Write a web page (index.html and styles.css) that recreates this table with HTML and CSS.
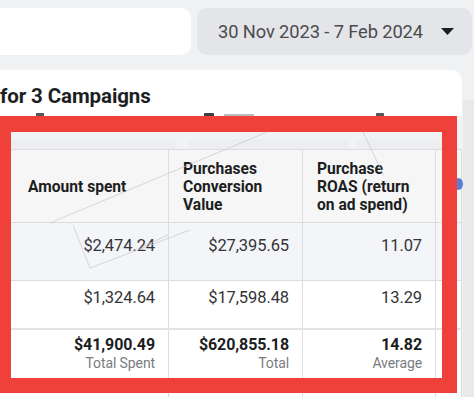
FILE: index.html
```html
<!DOCTYPE html>
<html>
<head>
<meta charset="utf-8">
<link rel="stylesheet" href="styles.css">
</head>
<body>
<div class="page">
  <div class="topbar">
    <div class="search"></div>
    <div class="date">
      <span>30 Nov 2023 - 7 Feb 2024</span>
      <svg class="caret" width="13" height="8" viewBox="0 0 13 8"><path d="M0 0 L13 0 L6.5 7 Z" fill="#1c1e21"/></svg>
    </div>
  </div>
  <div class="card">
    <div class="title">for 3 Campaigns</div>
    <div class="tools">
      <span class="tool t1"></span>
      <span class="tool t2"></span>
      <span class="tool t3"></span>
      <span class="tool t4"></span>
    </div>
    <div class="table">
      <div class="band"><span class="seg s1"></span><span class="seg s2"></span><span class="seg s3"></span></div>
      <div class="row head">
        <div class="cell c1">Amount spent</div>
        <div class="cell c2">Purchases Conversion Value</div>
        <div class="cell c3">Purchase ROAS (return on ad spend)</div>
        <div class="cell c4"><span class="dot"></span></div>
      </div>
      <div class="row r1">
        <div class="cell c1 num">$2,474.24</div>
        <div class="cell c2 num">$27,395.65</div>
        <div class="cell c3 num">11.07</div>
        <div class="cell c4"></div>
      </div>
      <div class="row r2">
        <div class="cell c1 num">$1,324.64</div>
        <div class="cell c2 num">$17,598.48</div>
        <div class="cell c3 num">13.29</div>
        <div class="cell c4"></div>
      </div>
      <div class="row total">
        <div class="cell c1 num"><b>$41,900.49</b><small>Total Spent</small></div>
        <div class="cell c2 num"><b>$620,855.18</b><small>Total</small></div>
        <div class="cell c3 num"><b>14.82</b><small>Average</small></div>
        <div class="cell c4"></div>
      </div>
    </div>
  </div>
  <div class="scroll"></div>
  <svg class="marks" width="474" height="397" viewBox="0 0 474 397">
    <g stroke="#c8c9cc" stroke-width="1" fill="none" opacity="0.7">
      <path d="M50 223 L267 132"/>
      <path d="M362 130 L384 176"/>
      <path d="M73 225 L90 268 L190 230"/>
      <path d="M168 235 L142 247"/>
    </g>
  </svg>
  <div class="redframe"></div>
</div>
</body>
</html>
```
FILE: styles.css
```css
html, body {
  margin: 0;
  padding: 0;
}
body {
  background: #f0f1f3;
  font-family: Roboto, "Noto Sans", Arial, sans-serif;
  width: 474px;
  height: 397px;
  overflow: hidden;
}
.page {
  position: relative;
  width: 474px;
  height: 397px;
  overflow: hidden;
}
.topbar {
  display: flex;
  gap: 6px;
  padding-top: 8px;
  height: 47px;
}
.search {
  width: 201px;
  margin-left: -10px;
  height: 47px;
  background: #ffffff;
  border-radius: 10px;
}
.date {
  width: 254px;
  height: 47px;
  background: #e4e5e8;
  border-radius: 10px;
  display: flex;
  align-items: center;
  padding-left: 21px;
  box-sizing: content-box;
  font-size: 18.3px;
  color: #4a4b4e;
  letter-spacing: -0.1px;
}
.caret {
  margin-left: 18px;
}
.card {
  margin-top: 15px;
  width: 462px;
  height: 340px;
  background: #ffffff;
  border-top-right-radius: 10px;
}
.title {
  font-weight: 700;
  font-size: 20.5px;
  color: #1c1e21;
  padding-top: 14px;
  height: 24px;
  line-height: 24px;
  letter-spacing: -0.1px;
}
.tools {
  height: 8px;
  display: flex;
  align-items: flex-end;
}
.tool {
  display: block;
  height: 3px;
  background: #55575c;
  border-radius: 1px 1px 0 0;
}
.t1 { width: 8px; margin-left: 36px; }
.t2 { width: 10px; margin-left: 160px; background: #3e4045; }
.t3 { width: 30px; margin-left: 10px; background: #b9bbbf; height: 2px; }
.t4 { width: 8px; margin-left: 122px; }
.band {
  height: 33px;
  background: #f1f2f4;
  border-bottom: 1px solid #dcdde0;
  display: flex;
  align-items: flex-end;
}
.seg {
  height: 10px;
  background: #eceef1;
}
.s1 { width: 175px; }
.s2 { width: 160px; margin-left: 14px; }
.s3 { width: 100px; margin-left: 8px; }
.row {
  display: flex;
  border-bottom: 1px solid #dcdde0;
}
.cell {
  box-sizing: border-box;
  border-right: 1px solid #dcdde0;
}
.c1 { width: 169px; }
.c2 { width: 134px; }
.c3 { width: 133px; }
.c4 { width: 26px; border-right: 1px solid #dcdde0; position: relative; }
.head {
  height: 72px;
  background: #f6f6f7;
  font-weight: 700;
  font-size: 15.6px;
  line-height: 18px;
  color: #1c1e21;
}
.head .cell {
  display: flex;
  align-items: center;
  padding: 2px 8px 0 14px;
}
.head .c1 { padding-left: 28px; }
.head .c4 { padding: 0; }
.dot {
  position: absolute;
  left: 18px;
  top: 28px;
  width: 9px;
  height: 12px;
  border-radius: 50%;
  background: #5b7fd0;
}
.num {
  text-align: right;
  padding-right: 13px;
  font-size: 16.5px;
  color: #333437;
  letter-spacing: -0.1px;
}
.r1 {
  height: 57px;
  background: #f4f5f9;
}
.r1 .num { padding-top: 13px; }
.r2 {
  height: 47px;
  background: #ffffff;
  border-bottom: 2px solid #e3e4e6;
}
.r2 .num { padding-top: 7px; }
.total {
  height: 70px;
  background: #ffffff;
  border-bottom: none;
}
.total .num {
  padding-top: 5px;
  display: flex;
  flex-direction: column;
  align-items: flex-end;
}
.total b {
  font-size: 16px;
  color: #1c1e21;
  line-height: 20px;
}
.total small {
  font-size: 14px;
  color: #7a7c80;
  line-height: 16px;
  letter-spacing: -0.1px;
}
.scroll {
  position: absolute;
  left: 463px;
  top: 100px;
  width: 11px;
  height: 297px;
  background: #e8e9eb;
}
.marks {
  position: absolute;
  left: 0;
  top: 0;
  pointer-events: none;
}
.redframe {
  position: absolute;
  left: 0;
  top: 116px;
  width: 431px;
  height: 246px;
  border-style: solid;
  border-color: #f0403a;
  border-width: 16px 15px 15px 11px;
}
```
